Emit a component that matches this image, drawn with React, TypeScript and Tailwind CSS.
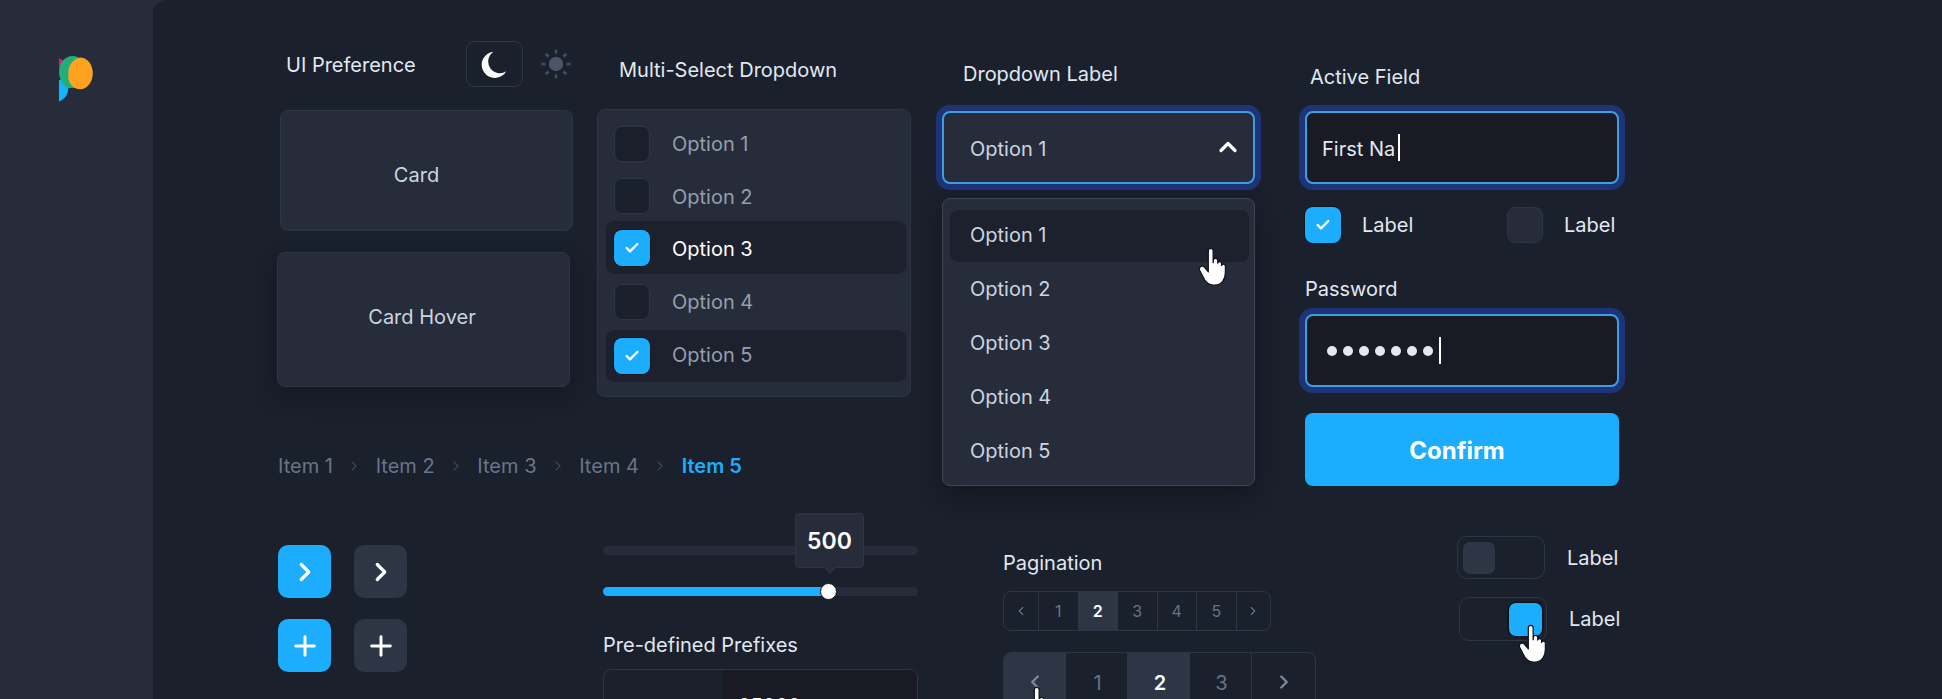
import React from "react";
import { ChevronRight, ChevronLeft, ChevronUp, ChevronDown, Plus, Check } from "lucide-react";

function Hand({ className }: { className?: string }) {
  return (
    <svg viewBox="0 0 25 33" className={className}>
      <path
        d="M8.6 3a2 2 0 0 1 4 0v10l.3-2.4a1.8 1.8 0 0 1 3.5.4v2.2a1.7 1.7 0 0 1 3.3.4v1.6a1.6 1.6 0 0 1 3.1.5V21c0 6-3.2 10.5-8.4 10.5h-2c-3.6 0-5.5-2-7-4.5L1.6 19.6c-.8-1.4-.4-2.9.8-3.5 1.2-.6 2.5-.2 3.2.9l3 3.6z"
        fill="#fff"
        stroke="#0f1218"
        strokeWidth="1"
        strokeLinejoin="round"
      />
    </svg>
  );
}

function Box({ checked }: { checked?: boolean }) {
  return checked ? (
    <span className="flex h-[36px] w-[36px] shrink-0 items-center justify-center rounded-[8px] bg-[#1dadff] shadow-[0_0_0_1px_#12161f]">
      <Check size={16} strokeWidth={3.6} className="text-white" />
    </span>
  ) : (
    <span className="block h-[36px] w-[36px] shrink-0 rounded-[8px] border border-[#2e3545] bg-[#1a202c]" />
  );
}

function Sun() {
  const rays = [0, 45, 90, 135, 180, 225, 270, 315];
  return (
    <svg viewBox="0 0 30 30" className="ml-[18px] h-[30px] w-[30px]">
      <circle cx="15" cy="15" r="7.2" fill="#4a5568" />
      {rays.map((r) => (
        <rect key={r} x="13.6" y="0.5" width="2.8" height="4.2" fill="#414b5c" transform={`rotate(${r} 15 15)`} />
      ))}
    </svg>
  );
}

const multi = [
  { t: "Option 1", h: "h-[52px]", p: "" },
  { t: "Option 2", h: "h-[51px]", p: "pt-[2px]" },
  { t: "Option 3", h: "h-[53px]", p: "pt-[2px]", c: true, on: true },
  { t: "Option 4", h: "h-[56px]", p: "" },
  { t: "Option 5", h: "h-[52px]", p: "pb-[2px]", c: true },
];
const crumbs = ["Item 1", "Item 2", "Item 3", "Item 4"];

function Caret({ className }: { className: string }) {
  return <span className={`inline-block h-[27px] w-[1.5px] bg-white ${className}`} />;
}

function Field({ children }: { children: React.ReactNode }) {
  return (
    <div className="flex h-[73px] w-[314px] items-center rounded-[8px] border-2 border-[#3b9fe0] bg-[#191a24] pl-[15px] ring-[6px] ring-[#1d3578]">
      {children}
    </div>
  );
}

export default function App() {
  return (
    <div className="flex h-[699px] w-[1942px] overflow-hidden bg-[#262c3a] font-[Inter,sans-serif] text-[20px] text-[#e2e8f0]">
      <aside className="w-[153px] shrink-0 pl-[58px] pt-[56px]">
        <svg viewBox="0 0 36 46" className="h-[46px] w-[36px]">
          <path d="M1 2.3 5.5 4.7 1 12.5z" fill="#f0145f" />
          <path d="M1 24V45.5C6.5 43.5 10.3 38.5 10.3 32V24z" fill="#0fb5fd" />
          <path d="M1 15.5C1 7 7 0 14.5 0 22 0 28.5 7 28.5 15.5 28.5 24 22 32 14.5 32H10.3C5 30 1 23 1 15.5z" fill="#1fae7c" />
          <path d="M10.3 22V17C10.3 9 15 2.8 22 1.4 29.5 1.4 34.8 8.5 34.8 17.3 34.8 26 29 33.3 22.5 33.3 16 33.3 11 28.5 10.3 22z" fill="#ffa220" />
        </svg>
      </aside>

      <main className="flex min-w-0 flex-1 flex-col rounded-tl-[14px] bg-[#1a202c] pl-[124px]">
        <div className="flex h-[486px]">
          <div className="flex flex-col">
            <div className="flex">
              {/* Cards */}
              <div className="w-[296px] pt-[41px]">
                <div className="flex h-[46px] items-center pl-[9px] pr-[2px]">
                  <span className="flex-1 pt-[2px]">UI Preference</span>
                  <div className="flex h-[46px] w-[57px] items-center justify-center rounded-[8px] border border-[#2e3545]">
                    <svg viewBox="0 0 24 24" className="mr-[2px] h-[27px] w-[27px]">
                      <path d="M12 .6A11.7 11.7 0 1 0 23.4 18 9.4 9.4 0 0 1 12 .6z" fill="#fff" />
                    </svg>
                  </div>
                  <Sun />
                </div>
                <div className="ml-[3px] mt-[23px] flex h-[121px] w-[293px] items-center justify-center rounded-[8px] border border-[#2e3545] bg-[#262c3a] pr-[20px] pt-[8px] text-[#cbd5e0]">
                  Card
                </div>
                <div className="mt-[21px] flex h-[135px] w-[293px] items-center justify-center rounded-[8px] border border-[#2e3545] bg-[#262c3a] pb-[6px] pr-[3px] text-[#cbd5e0] shadow-[0_10px_24px_rgba(0,0,0,0.25)]">
                  Card Hover
                </div>
              </div>
              {/* Multi select */}
              <div className="ml-[24px] w-[314px] pt-[58px]">
                <div className="h-[24px] whitespace-nowrap pl-[22px] leading-[24px]">Multi-Select Dropdown</div>
                <div className="mt-[27px] h-[288px] rounded-[8px] border border-[#2e3545] bg-[#262c3a] pl-[8px] pr-[4px] pt-[8px]">
                  {multi.map((o) => (
                    <div
                      key={o.t}
                      className={`flex items-center rounded-[8px] pl-[8px] ${o.h} ${o.c ? "bg-[#1c212d]" : ""}`}
                    >
                      <Box checked={o.c} />
                      <span className={`ml-[22px] ${o.p} ${o.on ? "text-white" : "text-[#939eb0]"}`}>{o.t}</span>
                    </div>
                  ))}
                </div>
              </div>
            </div>
            <nav className="ml-[1px] mt-[57px] flex h-[24px] items-center text-[#687589]">
              {crumbs.map((c) => (
                <React.Fragment key={c}>
                  <span>{c}</span>
                  <span className="flex w-[42.7px] justify-center text-[#3d4657]">
                    <ChevronRight size={16} strokeWidth={1.75} />
                  </span>
                </React.Fragment>
              ))}
              <span className="font-semibold text-[#1dadff]">Item 5</span>
            </nav>
          </div>

          {/* Dropdown */}
          <div className="ml-[31px] w-[313px] pt-[62px]">
            <div className="h-[24px] pl-[21px] leading-[24px]">Dropdown Label</div>
            <div className="mt-[25px] flex h-[73px] items-center justify-between rounded-[8px] border-2 border-[#3b9fe0] bg-[#262c3a] pl-[26px] pr-[11px] ring-[6px] ring-[#1d3578]">
              <span className="pt-[2px] text-[#cbd5e0]">Option 1</span>
              <ChevronUp size={28} strokeWidth={2.8} className="mb-[2px] text-white" />
            </div>
            <div className="relative mt-[14px] h-[288px] rounded-[8px] border border-[#3d4657] bg-[#262c3a] pl-[7px] pr-[5px] pt-[11px] text-[#cbd5e0] shadow-[0_10px_24px_rgba(0,0,0,0.3)]">
              <div className="flex h-[52px] items-center rounded-[8px] bg-[#1c212d] pb-[2px] pl-[20px]">Option 1</div>
              {["Option 2", "Option 3", "Option 4", "Option 5"].map((o) => (
                <div key={o} className="flex h-[54px] items-center pl-[20px]">
                  {o}
                </div>
              ))}
              <Hand className="absolute left-[255px] top-[48px] h-[40px] w-[30px]" />
            </div>
          </div>

          {/* Form */}
          <div className="ml-[50px] w-[315px] pt-[65px]">
            <div className="h-[24px] pl-[5px] leading-[24px]">Active Field</div>
            <div className="mt-[22px]">
              <Field>
                <span className="pt-[2px]">First Na</span>
                <Caret className="ml-[3px]" />
              </Field>
            </div>
            <div className="mt-[23px] flex items-center">
              <Box checked />
              <span className="ml-[21px] w-[145px]">Label</span>
              <span className="block h-[36px] w-[36px] shrink-0 rounded-[8px] border border-[#2e3545] bg-[#262c3a]" />
              <span className="ml-[21px]">Label</span>
            </div>
            <div className="mt-[34px] h-[24px] leading-[24px]">Password</div>
            <div className="mt-[13px]">
              <Field>
                <span className="ml-[5px] flex gap-[6px]">
                  {[0, 1, 2, 3, 4, 5, 6].map((d) => (
                    <span key={d} className="block h-[10px] w-[10px] rounded-full bg-[#e2e8f0]" />
                  ))}
                </span>
                <Caret className="ml-[6px]" />
              </Field>
            </div>
            <button className="mt-[26px] flex h-[73px] w-[314px] items-center justify-center rounded-[8px] bg-[#1dadff] pr-[10px] pt-[2px] text-[24px] font-bold text-white">
              Confirm
            </button>
          </div>
        </div>

        <div className="mt-[27px] flex">
          {/* Icon buttons */}
          <div className="ml-[1px] grid grid-cols-[53px_53px] grid-rows-[53px_53px] gap-x-[23px] gap-y-[21px] pt-[32px] text-white">
            <div className="flex items-center justify-center rounded-[10px] bg-[#1dadff]">
              <ChevronRight size={30} strokeWidth={2.6} />
            </div>
            <div className="flex items-center justify-center rounded-[10px] bg-[#2e3545]">
              <ChevronRight size={30} strokeWidth={2.6} />
            </div>
            <div className="flex items-center justify-center rounded-[10px] bg-[#1dadff]">
              <Plus size={32} strokeWidth={2.2} />
            </div>
            <div className="flex items-center justify-center rounded-[10px] bg-[#2e3545]">
              <Plus size={32} strokeWidth={2.2} />
            </div>
          </div>

          {/* Sliders */}
          <div className="relative ml-[196px] w-[315px] pt-[33px]">
            <div className="h-[9px] rounded-full bg-[#262c3a]" />
            <div className="mt-[32px] h-[9px] rounded-full bg-[#262c3a]">
              <div className="h-[9px] w-[225px] rounded-full bg-[#1dadff]" />
            </div>
            <div className="absolute left-[192px] top-0 flex h-[55px] w-[69px] items-center justify-center rounded-[4px] border border-[#2e3545] bg-[#262c3a] pt-[2px] text-[23px] font-semibold text-white">
              500
              <span className="absolute bottom-[-5px] left-[30px] h-[8px] w-[8px] rotate-45 border-b border-r border-[#2e3545] bg-[#262c3a]" />
            </div>
            <span className="absolute left-[217px] top-[70px] h-[17px] w-[17px] rounded-full border border-[#12161f] bg-white" />
            <div className="mt-[37px] h-[24px] leading-[24px]">Pre-defined Prefixes</div>
            <div className="mt-[12px] flex h-[70px] overflow-hidden rounded-[8px] border border-[#2e3545]">
              <div className="flex w-[119px] justify-end pr-[7px] pt-[26px] text-[#a0aec0]">
                <ChevronDown size={20} />
              </div>
              <div className="flex-1 bg-[#191a24] pl-[15px] pt-[21px] text-white">05000</div>
            </div>
          </div>

          {/* Pagination */}
          <div className="ml-[85px] pt-[38px]">
            <div className="h-[24px] leading-[24px]">Pagination</div>
            <div className="mt-[16px] flex h-[40px] w-[268px] overflow-hidden rounded-[8px] border border-[#2e3545] text-[16px] text-[#64748b]">
              <span className="flex w-[34px] items-center justify-center"><ChevronLeft size={14} /></span>
              {["1", "2", "3", "4", "5"].map((n) => (
                <span
                  key={n}
                  className={`flex w-[39.5px] items-center justify-center border-l border-[#2e3545] ${n === "2" ? "bg-[#2e3545] font-semibold text-white" : ""}`}
                >
                  {n}
                </span>
              ))}
              <span className="flex flex-1 items-center justify-center border-l border-[#2e3545]"><ChevronRight size={14} /></span>
            </div>
            <div className="relative mt-[21px] flex h-[70px] w-[313px] overflow-hidden rounded-[8px] border border-[#2e3545] pb-[16px] text-[20px] text-[#64748b]">
              <span className="relative -mb-[16px] flex w-[62px] justify-center bg-[#2e3545] pt-[18px] text-[#7c889c]">
                <ChevronLeft size={22} strokeWidth={2.6} />
                <Hand className="absolute left-[20px] top-[33px] h-[40px] w-[30px]" />
              </span>
              {["1", "2", "3"].map((n) => (
                <span
                  key={n}
                  className={`-mb-[16px] flex w-[62px] justify-center pl-[2px] pt-[15px] ${n === "2" ? "bg-[#2e3545] font-semibold text-white" : "border-r border-[#2e3545]"}`}
                >
                  {n}
                </span>
              ))}
              <span className="-mb-[16px] flex flex-1 justify-center pt-[18px] text-[#7c889c]">
                <ChevronRight size={22} strokeWidth={2.6} />
              </span>
            </div>
          </div>

          {/* Toggles */}
          <div className="ml-[141px] pt-[23px]">
            <div className="flex items-center">
              <div className="flex h-[43px] w-[88px] items-center rounded-[10px] border border-[#2e3545] pl-[5px]">
                <span className="block h-[32px] w-[32px] rounded-[7px] bg-[#2e3545]" />
              </div>
              <span className="ml-[22px]">Label</span>
            </div>
            <div className="relative ml-[2px] mt-[18px] flex items-center">
              <div className="flex h-[44px] w-[88px] items-center justify-end rounded-[10px] border border-[#2e3545] pr-[4px]">
                <span className="block h-[33px] w-[33px] rounded-[7px] bg-[#1dadff] shadow-[0_0_0_1.5px_#0f1218]" />
              </div>
              <span className="ml-[22px]">Label</span>
              <Hand className="absolute left-[59px] top-[27px] h-[40px] w-[30px]" />
            </div>
          </div>
        </div>
      </main>
    </div>
  );
}
